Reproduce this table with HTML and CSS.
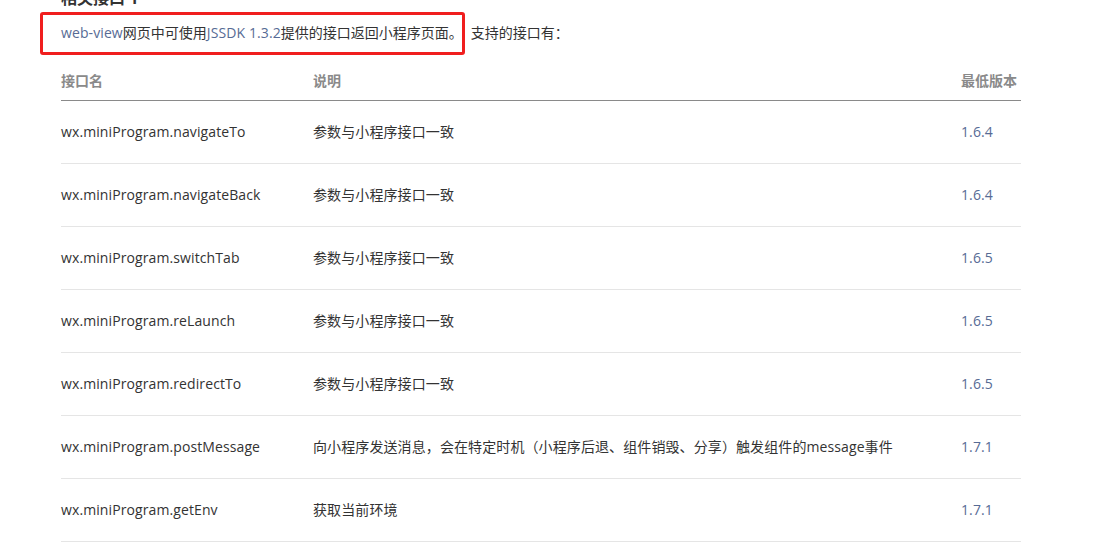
FILE: index.html
```html
<!DOCTYPE html>
<html lang="zh-CN">
<head>
    <meta charset="UTF-8">
    <title>web-view 相关接口</title>
    <link rel="stylesheet" href="styles.css">
</head>
<body>
    <div class="doc">
        <h3 class="doc-title">相关接口 1</h3>
        <p class="intro"><span class="mark"><a class="link">web-view</a>网页中可使用<a class="link">JSSDK 1.3.2</a>提供的接口返回小程序页面。</span><span class="after">支持的接口有：</span></p>

        <table class="api-table">
            <thead>
                <tr>
                    <th class="col-name">接口名</th>
                    <th class="col-desc">说明</th>
                    <th class="col-ver">最低版本</th>
                </tr>
            </thead>
            <tbody>
                <tr>
                    <td>wx.miniProgram.navigateTo</td>
                    <td>参数与小程序接口一致</td>
                    <td class="ver">1.6.4</td>
                </tr>
                <tr>
                    <td>wx.miniProgram.navigateBack</td>
                    <td>参数与小程序接口一致</td>
                    <td class="ver">1.6.4</td>
                </tr>
                <tr>
                    <td>wx.miniProgram.switchTab</td>
                    <td>参数与小程序接口一致</td>
                    <td class="ver">1.6.5</td>
                </tr>
                <tr>
                    <td>wx.miniProgram.reLaunch</td>
                    <td>参数与小程序接口一致</td>
                    <td class="ver">1.6.5</td>
                </tr>
                <tr>
                    <td>wx.miniProgram.redirectTo</td>
                    <td>参数与小程序接口一致</td>
                    <td class="ver">1.6.5</td>
                </tr>
                <tr>
                    <td>wx.miniProgram.postMessage</td>
                    <td>向小程序发送消息，会在特定时机（小程序后退、组件销毁、分享）触发组件的message事件</td>
                    <td class="ver">1.7.1</td>
                </tr>
                <tr>
                    <td>wx.miniProgram.getEnv</td>
                    <td>获取当前环境</td>
                    <td class="ver">1.7.1</td>
                </tr>
            </tbody>
        </table>
    </div>
</body>
</html>
```

FILE: styles.css
```css
body {
    margin: 0;
    padding: 0;
    background: #fff;
    color: #333;
    font-family: "Open Sans", "Noto Sans CJK SC", sans-serif;
    font-size: 14px;
    overflow: hidden;
}

.doc {
    padding-left: 61px;
    width: 960px;
}

/* Section title, scrolled mostly out of view */
.doc-title {
    margin: -12px 0 0;
    font-size: 16px;
    line-height: 20px;
    font-weight: bold;
    color: #333;
}

.intro {
    margin: 12px 0 0;
    line-height: 26px;
    color: #333;
}

.link {
    color: #576b95;
    text-decoration: none;
    letter-spacing: 0.1px;
}

.after {
    margin-left: 8px;
}

/* red annotation box */
.mark {
    position: relative;
}
.mark::before {
    content: "";
    position: absolute;
    left: -21px;
    right: -2px;
    top: -11px;
    bottom: -13px;
    border: 3px solid #f01e1e;
    border-radius: 3px;
}

/* Table */
.api-table {
    margin-top: 13px;
    width: 960px;
    border-collapse: collapse;
    table-layout: fixed;
}
.api-table th {
    height: 41px;
    padding: 0;
    text-align: left;
    font-weight: bold;
    color: #8a8a8a;
    border-bottom: 1px solid #8a8a8a;
}
.col-name { width: 252px; }
.col-desc { width: 648px; }
.col-ver { width: 60px; }

.api-table td {
    height: 60px;
    padding: 0 0 2px;
    border-bottom: 1px solid #e5e5e5;
    color: #333;
    letter-spacing: 0.1px;
}
.api-table td.ver {
    color: #576b95;
}
```
